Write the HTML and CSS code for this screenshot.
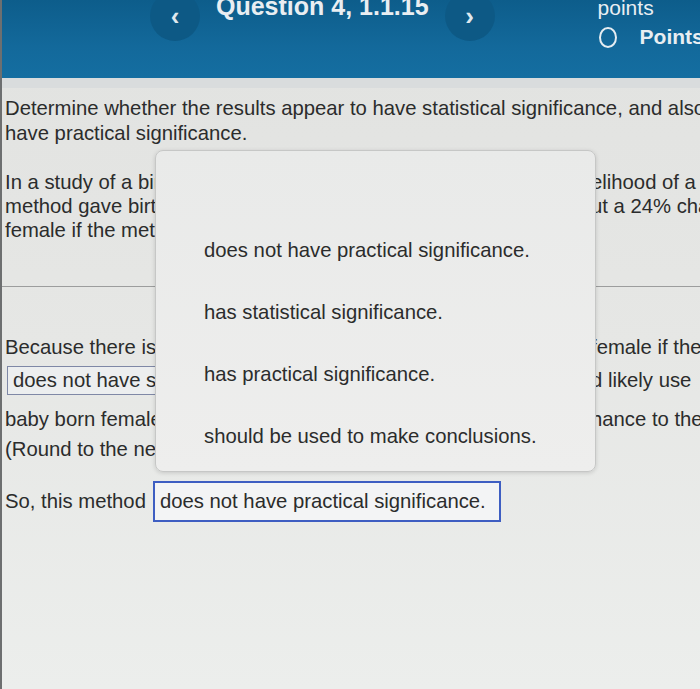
FILE: index.html
```html
<!DOCTYPE html>
<html>
<head>
<meta charset="utf-8">
<link rel="stylesheet" href="styles.css">
</head>
<body>
<header class="top">
  <nav class="qnav">
    <span class="navbtn">&#8249;</span>
    <span class="qtitle">Question 4, 1.1.15</span>
    <span class="navbtn">&#8250;</span>
  </nav>
  <div class="pts">
    <div class="pts-label">points</div>
    <div class="pts-row"><span class="ring"></span><span class="pts-bold">Points</span></div>
  </div>
</header>
<div class="strip"></div>
<main class="content">
  <p class="lead">
    <span class="ln">Determine whether the results appear to have statistical significance, and also whether the results appear to</span>
    <span class="ln">have practical significance.</span>
  </p>
  <div class="para">
    <div class="row"><span class="l">In a study of a birth sex selection method used to increase the lik</span><span class="r">elihood of a baby</span></div>
    <div class="row"><span class="l">method gave birth to 600 girls and 400 boys. There is abo</span><span class="r">ut a 24% chance</span></div>
    <div class="row"><span class="l">female if the method had no effect.</span><span class="r"></span></div>
  </div>
  <hr class="rule">
  <div class="para para2">
    <div class="row row-a"><span class="l">Because there is a 24% chance of getting that many girls by chance, a baby born</span><span class="r">female if the</span></div>
    <div class="row row-input"><span class="l"><span class="sel">does not have statistical significance.</span> The method would</span><span class="r">d likely use</span></div>
    <div class="row row-c"><span class="l">baby born female, which is close to the 50% c</span><span class="r">hance to the</span></div>
    <div class="row row-d"><span class="l">(Round to the nearest integer as needed.)</span><span class="r"></span></div>
  </div>
  <div class="answer">
    <span>So, this method</span>
    <span class="ansbox">does not have practical significance.</span>
  </div>
</main>
<div class="popup">
  <div class="opt">does not have practical significance.</div>
  <div class="opt">has statistical significance.</div>
  <div class="opt">has practical significance.</div>
  <div class="opt">should be used to make conclusions.</div>
</div>
</body>
</html>
```

FILE: styles.css
```css
html, body {
  margin: 0;
  padding: 0;
}
body {
  width: 700px;
  height: 689px;
  overflow: hidden;
  position: relative;
  font-family: "Liberation Sans", Arial, sans-serif;
  color: #2b2c2c;
  background: linear-gradient(#e1e2e0, #e6e7e5 50%, #eceeec);
  border-left: 2px solid #6d6f70;
  box-sizing: border-box;
}
.top {
  height: 78px;
  background: linear-gradient(#0d5d8b, #13699b 60%, #146ea1);
  display: flex;
  color: #e9eef2;
  position: relative;
}
.qnav {
  display: flex;
  align-items: center;
  flex-shrink: 0;
  margin-left: 148px;
  margin-top: -9px;
  height: 50px;
  gap: 16px;
}
.navbtn {
  flex-shrink: 0;
  width: 50px;
  height: 50px;
  border-radius: 50%;
  background: #0d5985;
  display: flex;
  align-items: center;
  justify-content: center;
  font-size: 26px;
  font-weight: bold;
  color: #dfe8ee;
}
.qtitle {
  flex-shrink: 0;
  white-space: nowrap;
  align-self: flex-start;
  font-size: 25px;
  line-height: 28px;
  font-weight: bold;
  margin-top: 1px;
}
.pts {
  flex-shrink: 0;
  margin-left: 103px;
  margin-top: -5px;
  white-space: nowrap;
}
.pts-label {
  font-size: 21px;
  line-height: 26px;
}
.pts-row {
  display: flex;
  align-items: center;
  margin-top: 4px;
}
.ring {
  width: 14px;
  height: 17px;
  border: 2.5px solid #e6edf2;
  border-radius: 50%;
  margin-left: 1px;
  margin-right: 23px;
}
.pts-bold {
  font-size: 21px;
  font-weight: bold;
}
.strip {
  height: 10px;
  background: #d9dcdd;
}
.content {
  padding-left: 3px;
  font-size: 20.3px;
}
.lead {
  margin: 8px 0 0 0;
  line-height: 25px;
}
.ln {
  display: block;
  white-space: nowrap;
}
.para {
  margin-top: 24px;
  line-height: 24px;
}
.row {
  display: grid;
  grid-template-columns: 586px auto;
  white-space: nowrap;
}
.row .l {
  overflow: hidden;
}
.rule {
  border: 0;
  border-top: 1.5px solid #9c9d9d;
  margin: 44px 0 0 -3px;
  width: 720px;
}
.para2 {
  margin-top: 44px;
}
.para2 .row {
  align-items: center;
}
.para2 .row-a {
  height: 32px;
}
.para2 .row-input {
  height: 34px;
}
.para2 .row-c {
  height: 36px;
  padding-top: 4px;
}
.para2 .row-d {
  height: 24px;
}
.para2 .row-input .l {
  padding-left: 2px;
}
.sel {
  display: inline-block;
  height: 27px;
  line-height: 27px;
  padding: 0 5px;
  border: 1.5px solid #7f88a6;
  background: #eceeef;
}
.answer {
  display: flex;
  align-items: center;
  gap: 7px;
  margin-top: 20px;
  white-space: nowrap;
}
.ansbox {
  display: inline-block;
  padding: 0 13px 0 5px;
  height: 37px;
  line-height: 37px;
  border: 2px solid #3e5ec2;
  background: #f3f4f5;
}
.popup {
  position: absolute;
  left: 153px;
  top: 150px;
  width: 441px;
  height: 322px;
  box-sizing: border-box;
  background: linear-gradient(#e9eae9, #eeeeed);
  border: 1px solid #c6c7c6;
  border-radius: 8px;
  box-shadow: 0 1px 4px rgba(0, 0, 0, 0.15);
  padding-top: 87px;
  padding-left: 48px;
  font-size: 20.3px;
  color: #2b2c2c;
  display: flex;
  flex-direction: column;
  gap: 38px;
}
.opt {
  line-height: 24px;
  white-space: nowrap;
}
```
